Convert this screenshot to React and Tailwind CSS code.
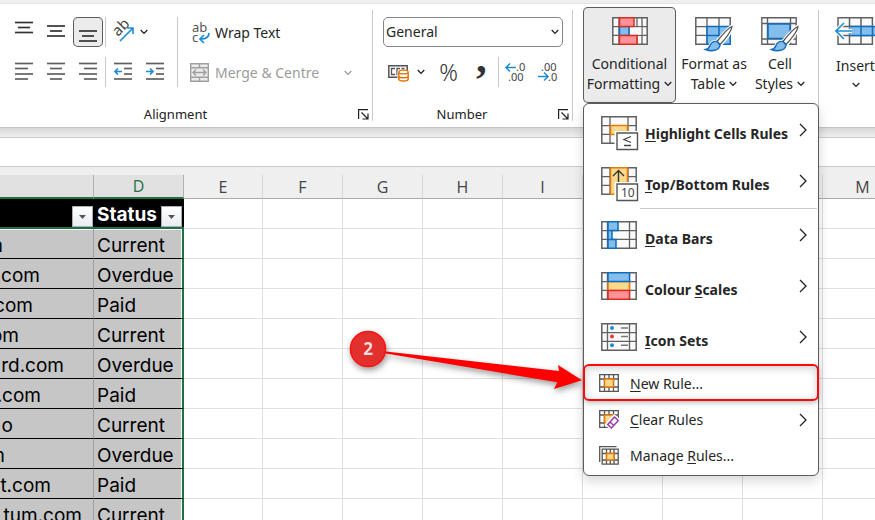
import clsx from 'clsx'

const columns = ['', 'D', 'E', 'F', 'G', 'H', 'I', 'J', 'K', 'L', 'M']

// `end` is where the scrolled e-mail text stops inside the column
const rows = [
  { email: 'm', end: 3, status: 'Current' },
  { email: '.com', end: 40, status: 'Overdue' },
  { email: '.com', end: 33, status: 'Paid' },
  { email: 'om', end: 19, status: 'Current' },
  { email: 'rd.com', end: 64, status: 'Overdue' },
  { email: '.com', end: 41, status: 'Paid' },
  { email: 'o', end: 13, status: 'Current' },
  { email: 'm', end: 5, status: 'Overdue' },
  { email: 't.com', end: 51, status: 'Paid' },
  { email: 'tum.com', end: 82, status: 'Current' },
]

const Chevron = ({ className = 'text-[#222]' }) => (
  <svg className={clsx('inline-block shrink-0', className)} width="8" height="6" viewBox="0 0 8 6" fill="none" stroke="currentColor" strokeWidth="1.3">
    <path d="M.7 1 4 4.4 7.3 1" />
  </svg>
)

const ChevronRight = () => (
  <svg width="8" height="14" viewBox="0 0 8 14" fill="none" stroke="#222" strokeWidth="1.3">
    <path d="M1 1l6 6-6 6" />
  </svg>
)

// Small ribbon icon made of horizontal strokes: [x1, x2, y]
const LinesIcon = ({ lines, color = '#606060', children }) => (
  <svg width="30" height="30" viewBox="0 0 30 30" fill="none" strokeWidth="1.7">
    {lines.map(([x1, x2, y]) => (
      <path key={y} d={`M${x1} ${y}H${x2}`} stroke={color} />
    ))}
    {children}
  </svg>
)

const IconButton = ({ label, active, children }) => (
  <button
    aria-label={label}
    className={clsx('flex size-[30px] shrink-0 items-center justify-center rounded-[5px]', active && 'bg-[#ebebeb] ring-1 ring-inset ring-[#5c5c5c]')}
  >
    {children}
  </button>
)

const Divider = () => <span className="h-[30px] w-px shrink-0 bg-[#c8c8c8]" />

const Launcher = ({ label }) => (
  <button aria-label={label} className="absolute bottom-[7px] right-1">
    <svg width="11" height="11" viewBox="0 0 11 11" fill="none" stroke="#222" strokeWidth="1.2">
      <path d="M.6 10V.6H10M3.5 3.5l6 6M10 4.5V10H4.5" />
    </svg>
  </button>
)

const RibbonGroup = ({ label, className, children }) => (
  <section className={clsx('relative h-[123px] shrink-0', className)}>
    {children}
    {label && <h2 className="absolute bottom-1 left-0 right-[22px] text-center text-[13px] leading-[18px] text-[#222]">{label}</h2>}
    {label && <Launcher label={`${label} settings`} />}
    <span className="absolute right-0 top-[6px] h-[111px] w-px bg-[#c8c8c8]" />
  </section>
)

const AlignmentGroup = () => (
  <RibbonGroup label="Alignment" className="w-[373px]">
    <div className="flex pt-[13px]">
      <div className="flex w-[178px] flex-col gap-[10px] border-r border-[#c8c8c8] pl-[9px]">
        <div className="flex items-center gap-[2px]">
          <IconButton label="Top align"><LinesIcon color="#333" lines={[[6, 24, 5.5], [9, 21, 10.5], [6, 24, 15.5]]} /></IconButton>
          <IconButton label="Middle align"><LinesIcon color="#333" lines={[[6, 24, 9], [9, 21, 14], [6, 24, 19]]} /></IconButton>
          <IconButton label="Bottom align" active><LinesIcon color="#333" lines={[[6, 24, 14], [9, 21, 19], [6, 24, 24]]} /></IconButton>
          <Divider />
          <button aria-label="Orientation" className="flex items-center gap-[2px]">
            <svg width="30" height="30" viewBox="0 0 30 30" fill="none" overflow="visible">
              <text transform="translate(10 20) rotate(-45)" fontSize="15" fill="#444">ab</text>
              <path d="M12 24 24.5 11.5M19 11h6v6" stroke="#1e8bd6" strokeWidth="1.6" />
            </svg>
            <Chevron />
          </button>
        </div>
        <div className="flex items-center gap-[2px]">
          <IconButton label="Align left"><LinesIcon lines={[[6, 24, 6.5], [6, 19, 11.5], [6, 24, 17], [6, 19, 22]]} /></IconButton>
          <IconButton label="Centre"><LinesIcon lines={[[6, 24, 6.5], [9, 21, 11.5], [6, 24, 17], [9, 21, 22]]} /></IconButton>
          <IconButton label="Align right"><LinesIcon lines={[[6, 24, 6.5], [11, 24, 11.5], [6, 24, 17], [11, 24, 22]]} /></IconButton>
          <Divider />
          <IconButton label="Decrease indent">
            <LinesIcon lines={[[6, 24, 6.5], [16, 24, 11.5], [16, 24, 17], [6, 24, 22]]}>
              <path d="M14 14.5H7M10 11.5l-3 3 3 3" stroke="#1e8bd6" />
            </LinesIcon>
          </IconButton>
          <IconButton label="Increase indent">
            <LinesIcon lines={[[6, 24, 6.5], [16, 24, 11.5], [16, 24, 17], [6, 24, 22]]}>
              <path d="M6 14.5h7M10 11.5l3 3-3 3" stroke="#1e8bd6" />
            </LinesIcon>
          </IconButton>
        </div>
      </div>
      <div className="flex flex-1 flex-col gap-[10px] pl-3">
        <button className="flex h-[30px] items-center gap-[5px] pt-px">
          <svg width="20" height="22" viewBox="0 0 20 22" fill="none" overflow="visible">
            <text x="2" y="10" fontSize="13" fill="#555">ab</text>
            <text x="2" y="20" fontSize="13" fill="#555">c</text>
            <path d="M19 11c0 4-2 6-8 6M14 13l-4 4 4 4" stroke="#1e8bd6" strokeWidth="1.7" />
          </svg>
          Wrap Text
        </button>
        <button className="flex h-[30px] items-center pt-px text-[#9b9b9b]">
          <svg width="19" height="19" viewBox="0 0 19 19" fill="none" stroke="#a0a0a0" strokeWidth="1.4">
            <path d="M.7.7h17.6v17.6H.7zM.7 4.7h17.6M.7 14.3h17.6M9.5.7v4M9.5 14.3v4" fill="#ececec" />
            <path d="M3.5 9.5h12M6 6.5l-3 3 3 3M13 6.5l3 3-3 3" />
          </svg>
          <span className="ml-[6px] mr-auto">Merge &amp; Centre</span>
          <Chevron className="mr-[21px] text-[#9b9b9b]" />
        </button>
      </div>
    </div>
  </RibbonGroup>
)

const NumberGroup = () => (
  <RibbonGroup label="Number" className="w-[200px]">
    <div className="flex flex-col gap-[10px] px-[10px] pt-[13px]">
      <div className="relative flex items-center">
        <select aria-label="Number format" className="h-[30px] w-full appearance-none rounded-[5px] border border-[#868686] bg-white pl-[2px]">
          <option>General</option>
        </select>
        <Chevron className="pointer-events-none absolute right-1" />
      </div>
      <div className="flex items-center">
        <button aria-label="Accounting number format" className="flex items-center gap-2 pl-1">
          <svg width="22" height="20" viewBox="0 0 22 20" fill="none">
            <path d="M1.8 3.7h18.4v11.5H1.8z" stroke="#555" strokeWidth="1.5" />
            <path d="M8 6.5H4.5v6H8M13 6.5h-3v6h3M17.5 6.5h-3" stroke="#555" strokeWidth="1.3" />
            <path d="M11.5 10v7c0 3.2 10 3.2 10 0v-7z" fill="#fff" stroke="#fff" strokeWidth="2" />
            <path d="M11.8 10.5V17c0 2.6 9.4 2.6 9.4 0v-6.5M11.8 14c0 2.4 9.4 2.4 9.4 0" fill="#fff" stroke="#e07000" strokeWidth="1.4" />
            <ellipse cx="16.5" cy="10" rx="4.7" ry="1.9" fill="#fff" stroke="#e07000" strokeWidth="1.4" />
          </svg>
          <Chevron />
        </button>
        <button aria-label="Percent style" className="ml-3 w-[30px] text-[23px] font-light leading-[30px] text-[#333]">%</button>
        <button aria-label="Comma style" className="ml-1">
          <svg width="30" height="30" viewBox="0 0 30 30" overflow="visible">
            <text x="12" y="15" fontSize="43" fontWeight="700" fontFamily="Liberation Serif" fill="#333">,</text>
          </svg>
        </button>
        <span className="ml-1 flex items-center gap-[2px]">
          <Divider />
          <IconButton label="Increase decimal">
            <svg width="30" height="30" viewBox="0 0 30 30" fontSize="11" fill="#444" overflow="visible">
              <text x="15" y="14">.0</text>
              <text x="7" y="24">.00</text>
              <path d="M15 10.5H5M9 6.5l-4 4 4 4" fill="none" stroke="#1e8bd6" strokeWidth="1.5" />
            </svg>
          </IconButton>
          <IconButton label="Decrease decimal">
            <svg width="30" height="30" viewBox="0 0 30 30" fontSize="11" fill="#444" overflow="visible">
              <text x="8" y="14">.00</text>
              <text x="15" y="24">.0</text>
              <path d="M5 19.5h10M11 15.5l4 4-4 4" fill="none" stroke="#1e8bd6" strokeWidth="1.5" />
            </svg>
          </IconButton>
        </span>
      </div>
    </div>
  </RibbonGroup>
)

const Brush = () => (
  <>
    <path d="M37 9.5c-3 1-9 8-15 15-4 0-6 1.5-7 4.5-.6 2-2 3.5-5 4 7 2.5 14 1 15-5 6-6 11-14 12-18.5z" fill="#fff" stroke="#fff" strokeWidth="3.5" />
    <path d="M37 9.5c-3 1-9.5 8-15 15l3 3c6-6 11.5-14 12-18z" fill="#fff" stroke="#555" strokeWidth="1.3" />
    <path d="M22 24.5c-4-.5-6 1.5-7 4-.7 2-2 3.5-4.5 4 6 2.5 14 1 14.5-4.5z" fill="#83beec" stroke="#0f6cbd" strokeWidth="1.4" />
  </>
)

// Backdrop grid shared by the conditional formatting icons
const GridIcon = ({ v = [9, 27], width = 39, children }) => (
  <svg width={width} height="36" viewBox={`0 0 ${width} 36`} fill="none" className="shrink-0">
    <path d="M.8.8h34.4v26.4H.8z" fill="#fafafa" stroke="#616161" strokeWidth="1.5" />
    <path d={`M.8 9.6h34.4M.8 18.4h34.4${v.map((x) => `M${x} .8v26.4`).join('')}`} stroke="#616161" strokeWidth="1.3" />
    {children}
  </svg>
)

const StyleButton = ({ lines, icon, active, className }) => (
  <button className={clsx('flex h-[96px] shrink-0 flex-col items-center rounded-[5px] pt-[10px]', active && 'bg-[#ebebeb] ring-1 ring-inset ring-[#5c5c5c]', className)}>
    {icon}
    <span className="mt-px leading-5">{lines[0]}</span>
    <span className="flex items-center gap-1 leading-5">{lines[1]}<Chevron /></span>
  </button>
)

const items = [
  {
    label: ['', 'H', 'ighlight Cells Rules'],
    icon: (
      <GridIcon>
        <path d="M9.5 9.6h17v8.8h-17z" fill="#f9d98b" stroke="#e37b0c" strokeWidth="1.5" />
        <path d="M15 16.5h22v17H15z" fill="#fff" stroke="#fff" strokeWidth="3" />
        <path d="M16 17h20.5v16.5H16z" fill="#fff" stroke="#555" strokeWidth="1.4" />
        <path d="M30 20.5l-7 3 7 3M23 29.5h7" stroke="#444" strokeWidth="1.3" />
      </GridIcon>
    ),
  },
  {
    label: ['', 'T', 'op/Bottom Rules'],
    icon: (
      <GridIcon>
        <path d="M9.5.8h17v26.4h-17z" fill="#f9d98b" stroke="#e37b0c" strokeWidth="1.5" />
        <path d="M17.5 18V4M12 9l5.5-5.5L23 9" stroke="#333" strokeWidth="1.4" />
        <path d="M15 16.5h22v17H15z" fill="#fff" stroke="#fff" strokeWidth="3" />
        <path d="M16 17h20.5v16.5H16z" fill="#fff" stroke="#555" strokeWidth="1.4" />
        <text x="20" y="30" fontSize="12" fontWeight="400" fill="#444">10</text>
      </GridIcon>
    ),
  },
  {
    label: ['', 'D', 'ata Bars'],
    divided: true,
    icon: (
      <GridIcon v={[6.5, 28.5]}>
        <path d="M7 .8h10v8.8H7zM7 9.6h4v8.8H7zM7 18.4h8v8.8H7z" fill="#83beec" stroke="#0f6cbd" strokeWidth="1.5" />
      </GridIcon>
    ),
  },
  {
    label: ['Colour ', 'S', 'cales'],
    icon: (
      <GridIcon v={[6.5, 28.5]}>
        <path d="M7 9.6h21.5v8.8H7z" fill="#f9d98b" stroke="#e37b0c" strokeWidth="1.5" />
        <path d="M7 .8h21.5v8.8H7z" fill="#83beec" stroke="#0f6cbd" strokeWidth="1.5" />
        <path d="M7 18.4h21.5v8.8H7z" fill="#ff9199" stroke="#d92c20" strokeWidth="1.5" />
      </GridIcon>
    ),
  },
  {
    label: ['', 'I', 'con Sets'],
    icon: (
      <GridIcon v={[6.5, 28.5]}>
        <circle cx="11" cy="5" r="2" fill="#1e8bd6" />
        <circle cx="11" cy="13.5" r="2" fill="#ee3a35" />
        <circle cx="11" cy="22.3" r="2" fill="#1e8bd6" />
        <path d="M20 5h7M20 13.5h7M20 22.3h7" stroke="#777" strokeWidth="1.4" />
      </GridIcon>
    ),
  },
]

const SmallIcon = ({ children }) => (
  <svg width="20" height="20" viewBox="0 0 20 20" fill="none" stroke="#555" strokeWidth="1.3" className="shrink-0">
    {children}
  </svg>
)

// Cell grid with the middle cell highlighted
const SmallGrid = () => (
  <>
    <path d="M.7.7h18.6v16.6H.7zM.7 5h18.6M.7 13h18.6M5.5.7v16.6M10 .7v16.6M14.5.7v16.6" fill="#fff" />
    <path d="M5.5 5h9v8h-9z" fill="#f9d98b" stroke="#e37b0c" strokeWidth="1.5" />
  </>
)

const smallItems = [
  {
    label: ['', 'N', 'ew Rule...'],
    marked: true,
    icon: <SmallIcon><SmallGrid /></SmallIcon>,
  },
  {
    label: ['', 'C', 'lear Rules'],
    arrow: true,
    icon: (
      <SmallIcon>
        <SmallGrid />
        <path d="M15 4l6 5v11h-8L5 15z" fill="#fff" stroke="none" />
        <path d="M15.5 7 19.3 10.5 12.5 18 8.7 14.5zM11 12l3.8 3.5" fill="#fff" stroke="#973bab" strokeWidth="1.5" />
      </SmallIcon>
    ),
  },
  {
    label: ['Manage ', 'R', 'ules...'],
    icon: (
      <SmallIcon>
        <path d="M.7 16V.7H17.5" />
        <path d="M3.2 3.2h16v15h-16zM3.2 7.5h16M3.2 14h16M7.5 3.2v15M11.3 3.2v15M15 3.2v15" fill="#fff" />
        <path d="M7.5 7.5H15V14H7.5z" fill="#f9d98b" stroke="#e37b0c" strokeWidth="1.5" />
      </SmallIcon>
    ),
  },
]

const MenuLabel = ({ parts }) => (
  <span className="mr-auto whitespace-pre">
    {parts[0]}
    <span className="underline underline-offset-2">{parts[1]}</span>
    {parts[2]}
  </span>
)

// Numbered callout pointing at a menu item
const Callout = () => (
  <span className="pointer-events-none absolute -left-[244px] -top-[41px]">
    <svg width="250" height="80" viewBox="0 0 250 80" className="drop-shadow-[1px_3px_3px_rgba(0,0,0,0.4)]">
      <path d="M46 26.5 219 46l-1-6 24 15.3L214 64l3.3-6.7L46 28.500z" fill="#fe0000" />
      <circle cx="28" cy="24" r="17.5" fill="#e2302f" stroke="#fb1414" strokeWidth="1.6" />
      <text x="28" y="30" textAnchor="middle" fontSize="17" fontWeight="700" fontFamily="Open Sans" fill="#fbdcdc">2</text>
    </svg>
  </span>
)

const FormattingMenu = () => (
  <div role="menu" className="absolute left-[10px] top-[99px] z-10 w-[236px] rounded-[6px] border border-[#5c5c5c] bg-white pb-px pt-[2px] shadow-[0_5px_12px_rgba(0,0,0,0.16)]">
    {items.map((item) => (
      <div key={item.label.join('')}>
        {item.divided && <hr className="mb-[2px] ml-14 mr-px border-[#c8c8c8]" />}
        <button role="menuitem" className="flex h-[51px] w-full items-start pl-[17px] pr-[11px] pt-[10px] text-left font-bold">
          {item.icon}
          <span className="ml-[5px] mr-auto pt-2 leading-5"><MenuLabel parts={item.label} /></span>
          <span className="pt-[7px]"><ChevronRight /></span>
        </button>
      </div>
    ))}
    <div className="pt-[2px]">
      {smallItems.map((item) => (
        <button key={item.label.join('')} role="menuitem" className="relative flex h-9 w-full items-center gap-[11px] pl-[15px] pr-[11px] text-left">
          {item.icon}
          <MenuLabel parts={item.label} />
          {item.arrow && <ChevronRight />}
          {item.marked && (
            <>
              <span className="absolute -inset-x-px -top-[2px] bottom-px rounded-[6px] border-2 border-[#fb0a0a] shadow-[inset_0_2px_8px_rgba(0,0,0,0.2),0_2px_5px_rgba(0,0,0,0.25)]" />
              <Callout />
            </>
          )}
        </button>
      ))}
    </div>
  </div>
)

const StylesGroup = () => (
  <RibbonGroup className="w-[246px]">
    <div className="flex pl-[10px] pt-[3px]">
      <StyleButton
        active
        className="w-[93px]"
        lines={['Conditional', 'Formatting']}
        icon={
          <GridIcon width={36} v={[7, 17, 25, 30]}>
            <path d="M17.8 10.3h11.5v7.4H17.8z" fill="#fafafa" />
            <path d="M7.5 9.6H17v8.8H7.5z" fill="#83beec" stroke="#0f6cbd" strokeWidth="1.5" />
            <path d="M7.5.8H22v8.8H7.5zM7.5 18.4H25v8.8H7.5z" fill="#ff9199" stroke="#d92c20" strokeWidth="1.5" />
          </GridIcon>
        }
      />
      <StyleButton
        className="w-[76px]"
        lines={['Format as', 'Table']}
        icon={
          <GridIcon v={[12, 24]}>
            <path d="M12 9.6h23.2v17.6H12zM24 9.6v17.6M12 18.4h23.2" fill="#83beec" stroke="#0f6cbd" strokeWidth="1.5" />
            <Brush />
          </GridIcon>
        }
      />
      <StyleButton
        className="w-[56px]"
        lines={['Cell', 'Styles']}
        icon={
          <svg width="39" height="36" viewBox="0 0 39 36" fill="none">
            <path d="M.8.8h34.4v26.4H.8zM.8 6.5h34.4M.8 22h34.4M6.5.8v26.4M29.5.8v26.4" fill="#fafafa" stroke="#616161" strokeWidth="1.4" />
            <path d="M7 7h22v14.5H7z" fill="#83beec" stroke="#0f6cbd" strokeWidth="1.5" />
            <Brush />
          </svg>
        }
      />
    </div>
    <FormattingMenu />
  </RibbonGroup>
)

const CellsGroup = () => (
  <RibbonGroup className="w-[200px]">
    <button className="flex w-[73px] flex-col items-center pt-[13px]">
      <svg width="42" height="39" viewBox="0 0 42 39" fill="none">
        <path d="M3 .8h34.4v26.4H3zM14.5.8v26.4M26 .8v26.4M3 9.6h34.4M3 18.4h34.4" fill="#fafafa" stroke="#616161" strokeWidth="1.5" />
        <path d="M14.5 9.6H41v8.8H14.5M26 9.6v8.8M37.5 9.6v8.8" fill="#83beec" stroke="#0f6cbd" strokeWidth="1.5" />
        <path d="M17 14H1M9 6l-8 8 8 8" stroke="#fff" strokeWidth="4" />
        <path d="M17 14H1M9 6l-8 8 8 8" stroke="#1e8bd6" strokeWidth="1.6" />
      </svg>
      <span className="leading-5">Insert</span>
      <Chevron className="mt-[6px]" />
    </button>
  </RibbonGroup>
)

const FilterButton = ({ label }) => (
  <button aria-label={label} className="flex size-[21px] shrink-0 items-center justify-center border border-[#a9adb5] bg-linear-to-b from-white to-[#e9ecf2]">
    <svg width="7" height="4" viewBox="0 0 7 4"><path d="M0 0h7L3.5 4z" fill="#555" /></svg>
  </button>
)

const blankCells = columns.slice(2).map((c) => <td key={c} className="border-b border-r border-[#dfdfdf]" />)

const Sheet = () => (
  <table className="w-[903px] table-fixed border-separate border-spacing-0 bg-white font-['Inter',sans-serif] text-[19px] text-black">
    <colgroup>
      <col className="w-[94px]" />
      <col className="w-[90px]" />
      <col className="w-[79px]" />
    </colgroup>
    <thead>
      <tr className="h-6 font-['Open_Sans',sans-serif] text-base leading-5">
        {columns.map((c, i) => (
          <th
            key={i}
            scope="col"
            className={clsx(
              'p-0 font-normal',
              i < 2
                ? 'border-b-2 border-r border-b-[#1e7145] border-r-[#b0b0b0] bg-[#e1e1e1] text-[#1e7145]'
                : 'border-b border-r border-b-[#ababab] border-r-[#d8d8d8] bg-[#efefef] text-[#444]'
            )}
          >
            {c}
          </th>
        ))}
      </tr>
    </thead>
    <tbody>
      <tr className="h-[30px]">
        <td className="border-b-2 border-[#1e7145] bg-black p-0">
          <div className="flex justify-end pr-px pt-[7px]"><FilterButton label="Filter e-mail" /></div>
        </td>
        <td className="border-b-2 border-[#1e7145] bg-black p-0 font-bold text-white">
          <div className="flex h-7 items-end justify-between pl-[3px] pr-[2px]">
            <span className="leading-6">Status</span>
            <FilterButton label="Filter status" />
          </div>
        </td>
        {blankCells}
      </tr>
      {rows.map((row, i) => (
        <tr key={i} className="h-[30px]">
          <td className={clsx('border-b border-r border-b-black border-r-[#a0a0a0] bg-[#c6c6c6] p-0', i === 0 && 'shadow-[inset_0_1px_0_#fff]')}>
            <div className="flex justify-end overflow-hidden pt-1 leading-[25px]" style={{ width: row.end }}>{row.email}</div>
          </td>
          <td
            className={clsx(
              'border-b border-r-2 border-b-black border-r-[#1e7145] bg-[#c6c6c6] p-0 pl-[3px] pt-1 leading-[25px]',
              i === 0 ? 'shadow-[inset_-1px_1px_0_#fff]' : 'shadow-[inset_-1px_0_0_#fff]'
            )}
          >
            {row.status}
          </td>
          {blankCells}
        </tr>
      ))}
    </tbody>
  </table>
)

export default function App() {
  return (
    <div className="h-screen overflow-hidden bg-[#efefef] pt-[3px] font-['Noto_Sans',sans-serif] text-sm text-[#262626]">
      <header className="flex border-y border-b-[#c4c4c4] border-t-[#e4e4e4] bg-white">
        <AlignmentGroup />
        <NumberGroup />
        <StylesGroup />
        <CellsGroup />
      </header>
      <div className="h-[9px] bg-linear-to-b from-[#d8d8d8] to-[#efefef]" />
      <input aria-label="Formula bar" className="block h-[30px] w-full border-y border-[#cbcbcb] bg-white" />
      <main className="overflow-hidden pt-2">
        <Sheet />
      </main>
    </div>
  )
}
